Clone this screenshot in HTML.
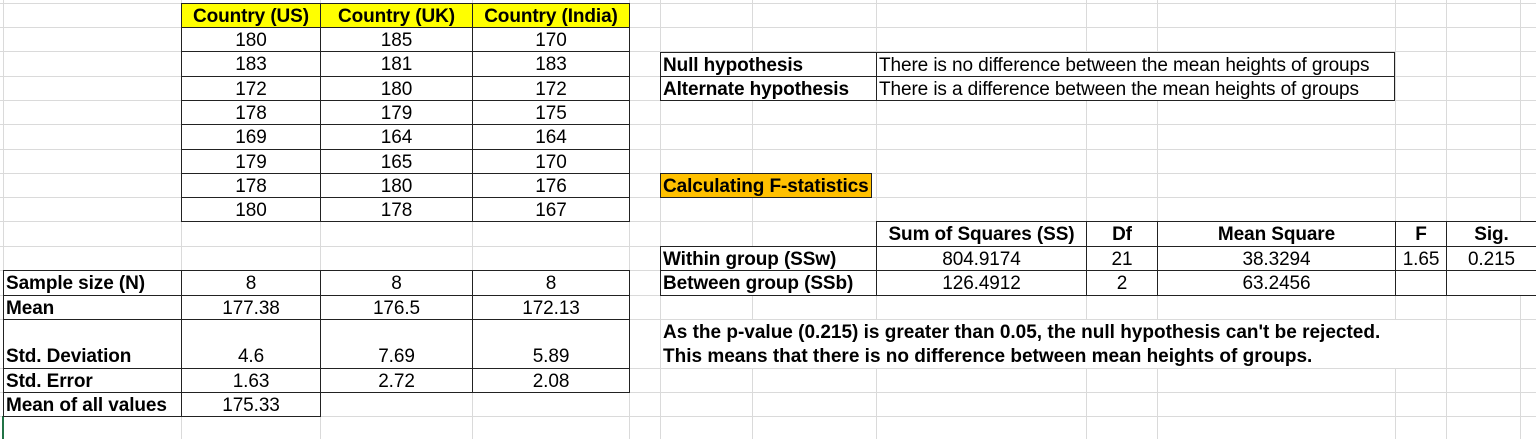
<!DOCTYPE html>
<html><head><meta charset="utf-8"><style>
body{margin:0;width:1536px;height:439px;background:#fff;position:relative;overflow:hidden;font-family:"Liberation Sans",Arial,sans-serif;font-size:19px;color:#000}
.h{position:absolute;left:0;width:1536px;height:1px;background:#dadada}
.v{position:absolute;top:0;height:439px;width:1px;background:#dadada}
.c{position:absolute;box-sizing:border-box;border:1px solid #222;background:#fff;text-align:center;line-height:25px;white-space:nowrap;overflow:hidden;letter-spacing:-0.1px}
.l{text-align:left;padding-left:2px}
.b{font-weight:bold}
.y{background:#ffff00}
.o{background:#ffc000}
.t{position:absolute;font-weight:bold;white-space:nowrap}
</style></head><body>
<div class="h" style="top:3px"></div><div class="h" style="top:27px"></div><div class="h" style="top:51px"></div><div class="h" style="top:76px"></div><div class="h" style="top:100px"></div><div class="h" style="top:124px"></div><div class="h" style="top:149px"></div><div class="h" style="top:173px"></div><div class="h" style="top:197px"></div><div class="h" style="top:221px"></div><div class="h" style="top:246px"></div><div class="h" style="top:270px"></div><div class="h" style="top:295px"></div><div class="h" style="top:319px"></div><div class="h" style="top:368px"></div><div class="h" style="top:392px"></div><div class="h" style="top:416px"></div>
<div class="v" style="left:3px"></div><div class="v" style="left:181px"></div><div class="v" style="left:320px"></div><div class="v" style="left:472px"></div><div class="v" style="left:629px"></div><div class="v" style="left:660px"></div><div class="v" style="left:752px"></div><div class="v" style="left:876px"></div><div class="v" style="left:1086px"></div><div class="v" style="left:1157px"></div><div class="v" style="left:1395px"></div><div class="v" style="left:1446px"></div><div class="v" style="left:1520px"></div>
<div style="position:absolute;left:2px;top:416px;width:2px;height:23px;background:#217346"></div>

<div class="c b y" style="left:181px;top:3px;width:140px;height:25px">Country (US)</div>
<div class="c b y" style="left:320px;top:3px;width:153px;height:25px">Country (UK)</div>
<div class="c b y" style="left:472px;top:3px;width:158px;height:25px">Country (India)</div>

<div class="c" style="left:181px;top:27px;width:140px;height:25px">180</div><div class="c" style="left:320px;top:27px;width:153px;height:25px">185</div><div class="c" style="left:472px;top:27px;width:158px;height:25px">170</div>
<div class="c" style="left:181px;top:51px;width:140px;height:26px">183</div><div class="c" style="left:320px;top:51px;width:153px;height:26px">181</div><div class="c" style="left:472px;top:51px;width:158px;height:26px">183</div>
<div class="c" style="left:181px;top:76px;width:140px;height:25px">172</div><div class="c" style="left:320px;top:76px;width:153px;height:25px">180</div><div class="c" style="left:472px;top:76px;width:158px;height:25px">172</div>
<div class="c" style="left:181px;top:100px;width:140px;height:25px">178</div><div class="c" style="left:320px;top:100px;width:153px;height:25px">179</div><div class="c" style="left:472px;top:100px;width:158px;height:25px">175</div>
<div class="c" style="left:181px;top:124px;width:140px;height:26px">169</div><div class="c" style="left:320px;top:124px;width:153px;height:26px">164</div><div class="c" style="left:472px;top:124px;width:158px;height:26px">164</div>
<div class="c" style="left:181px;top:149px;width:140px;height:25px">179</div><div class="c" style="left:320px;top:149px;width:153px;height:25px">165</div><div class="c" style="left:472px;top:149px;width:158px;height:25px">170</div>
<div class="c" style="left:181px;top:173px;width:140px;height:25px">178</div><div class="c" style="left:320px;top:173px;width:153px;height:25px">180</div><div class="c" style="left:472px;top:173px;width:158px;height:25px">176</div>
<div class="c" style="left:181px;top:197px;width:140px;height:25px">180</div><div class="c" style="left:320px;top:197px;width:153px;height:25px">178</div><div class="c" style="left:472px;top:197px;width:158px;height:25px">167</div>

<div class="c b l" style="left:3px;top:270px;width:179px;height:26px">Sample size (N)</div><div class="c" style="left:181px;top:270px;width:140px;height:26px">8</div><div class="c" style="left:320px;top:270px;width:153px;height:26px">8</div><div class="c" style="left:472px;top:270px;width:158px;height:26px">8</div>
<div class="c b l" style="left:3px;top:295px;width:179px;height:25px">Mean</div><div class="c" style="left:181px;top:295px;width:140px;height:25px">177.38</div><div class="c" style="left:320px;top:295px;width:153px;height:25px">176.5</div><div class="c" style="left:472px;top:295px;width:158px;height:25px">172.13</div>
<div class="c b l" style="left:3px;top:319px;width:179px;height:50px;line-height:73px">Std. Deviation</div><div class="c" style="left:181px;top:319px;width:140px;height:50px;line-height:73px">4.6</div><div class="c" style="left:320px;top:319px;width:153px;height:50px;line-height:73px">7.69</div><div class="c" style="left:472px;top:319px;width:158px;height:50px;line-height:73px">5.89</div>
<div class="c b l" style="left:3px;top:368px;width:179px;height:25px">Std. Error</div><div class="c" style="left:181px;top:368px;width:140px;height:25px">1.63</div><div class="c" style="left:320px;top:368px;width:153px;height:25px">2.72</div><div class="c" style="left:472px;top:368px;width:158px;height:25px">2.08</div>
<div class="c b l" style="left:3px;top:392px;width:179px;height:25px">Mean of all values</div><div class="c" style="left:181px;top:392px;width:140px;height:25px">175.33</div>

<div class="c b l" style="left:660px;top:52px;width:217px;height:25px">Null hypothesis</div><div class="c l" style="left:876px;top:52px;width:519px;height:25px">There is no difference between the mean heights of groups</div>
<div class="c b l" style="left:660px;top:76px;width:217px;height:25px">Alternate hypothesis</div><div class="c l" style="left:876px;top:76px;width:519px;height:25px">There is a difference between the mean heights of groups</div>

<div class="c b l o" style="left:660px;top:173px;width:212px;height:25px">Calculating F-statistics</div>

<div class="c b" style="left:876px;top:221px;width:211px;height:26px">Sum of Squares (SS)</div><div class="c b" style="left:1086px;top:221px;width:72px;height:26px">Df</div><div class="c b" style="left:1157px;top:221px;width:239px;height:26px">Mean Square</div><div class="c b" style="left:1395px;top:221px;width:52px;height:26px">F</div><div class="c b" style="left:1446px;top:221px;width:90px;height:26px;border-right:none">Sig.</div>
<div class="c b l" style="left:660px;top:246px;width:217px;height:25px">Within group (SSw)</div><div class="c" style="left:876px;top:246px;width:211px;height:25px">804.9174</div><div class="c" style="left:1086px;top:246px;width:72px;height:25px">21</div><div class="c" style="left:1157px;top:246px;width:239px;height:25px">38.3294</div><div class="c" style="left:1395px;top:246px;width:52px;height:25px">1.65</div><div class="c" style="left:1446px;top:246px;width:90px;height:25px;border-right:none">0.215</div>
<div class="c b l" style="left:660px;top:270px;width:217px;height:26px">Between group (SSb)</div><div class="c" style="left:876px;top:270px;width:211px;height:26px">126.4912</div><div class="c" style="left:1086px;top:270px;width:72px;height:26px">2</div><div class="c" style="left:1157px;top:270px;width:239px;height:26px">63.2456</div><div class="c" style="left:1395px;top:270px;width:52px;height:26px"></div><div class="c" style="left:1446px;top:270px;width:90px;height:26px;border-right:none"></div>

<div style="position:absolute;left:661px;top:320px;width:760px;height:48px;background:#fff"></div>
<div class="t" style="left:663px;top:322px">As the p-value (0.215) is greater than 0.05, the null hypothesis can't be rejected.</div>
<div class="t" style="left:663px;top:346px">This means that there is no difference between mean heights of groups.</div>
</body></html>
